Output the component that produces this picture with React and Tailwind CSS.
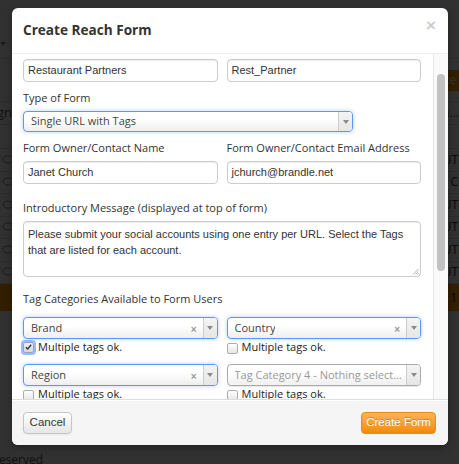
import React from 'react';

const sans = "font-['Open_Sans',sans-serif]";
const arial = "font-['Liberation_Sans',Arial,sans-serif]";

function Caret() {
  return (
    <svg width="6" height="4" viewBox="0 0 6 4" className="block">
      <path d="M0 0 L6 0 L3 4 Z" fill="#8a8a8a" />
    </svg>
  );
}

function TextInput({ value }) {
  return (
    <div
      className={`flex h-[23px] items-center rounded-[4px] border border-[#cccccc] bg-white pl-[4px] text-[11px] text-[#333] shadow-[inset_0_1px_1px_rgba(0,0,0,0.075)] ${arial}`}
    >
      {value}
    </div>
  );
}

function Chosen({ value, placeholder, clear, focused, height = 'h-[22px]' }) {
  return (
    <div
      className={`flex ${height} items-stretch overflow-hidden rounded-[4px] border bg-linear-to-b from-white from-40% to-[#eeeeee] ${
        focused
          ? 'border-[#5897fb] shadow-[0_0_4px_rgba(88,151,251,0.45)]'
          : 'border-[#aaaaaa] shadow-[0_0_3px_white_inset,0_1px_1px_rgba(0,0,0,0.1)]'
      }`}
    >
      <span
        className={`flex min-w-0 flex-1 items-center truncate pl-[7px] text-[11px] ${sans} ${
          placeholder ? 'text-[#999]' : 'text-[#444]'
        }`}
      >
        <span className="truncate">{value || placeholder}</span>
      </span>
      {clear && (
        <span className={`flex items-center pr-[6px] pt-[2px] text-[10px] font-bold text-[#999] ${arial}`}>
          ×
        </span>
      )}
      <span className="flex w-[14px] shrink-0 items-center justify-center border-l border-[#cccccc] bg-linear-to-b from-[#f4f4f4] to-[#e6e6e6]">
        <Caret />
      </span>
    </div>
  );
}

function Check({ checked, label }) {
  return (
    <div className="mt-[2px] flex h-[12px] items-center gap-[4px]">
      {checked ? (
        <span className="flex h-[11px] w-[11px] items-center justify-center rounded-[2px] border border-[#8aa4cf] bg-linear-to-b from-[#eeeeee] to-[#d8d8d8] shadow-[0_0_0_2px_rgba(100,150,240,0.65)]">
          <svg width="7" height="6" viewBox="0 0 7 6">
            <path d="M0.8 3.2 L2.7 5 L6.2 0.8" fill="none" stroke="#333" strokeWidth="1.4" />
          </svg>
        </span>
      ) : (
        <span className="mt-[3px] h-[11px] w-[11px] rounded-[2px] border border-[#adadad] bg-linear-to-b from-white to-[#e6e6e6]" />
      )}
      <span className={`text-[11px] leading-[12px] text-[#222] ${sans}`}>{label}</span>
    </div>
  );
}

function Label({ children, className = '' }) {
  return <div className={`text-[11px] leading-[15px] text-[#333] ${sans} ${className}`}>{children}</div>;
}

function BackgroundPage() {
  const rows = ['UT', 'C', 'UT', 'UT', 'UT', 'UT'];
  return (
    <div className={`h-full w-full bg-[#f2f2f2] text-[12px] text-[#555] ${sans}`}>
      <div className="flex h-[59px] items-end border-b border-[#dddddd] pb-[12px]">
        <Caret />
      </div>
      <div className="flex h-[42px] items-center justify-end">
        <div className="-mr-[4px] flex h-[21px] w-[20px] items-center overflow-hidden rounded-[3px] bg-[#f89406] pl-[2px] text-[12px] text-white">
          te
        </div>
      </div>
      <div className="flex h-[24px] items-center justify-between border-y border-[#dddddd]">
        <span className="text-[13px] -ml-[3px]">gns</span>
        <span className="text-[12px] text-[#777]">h...</span>
      </div>
      <div className="h-[24px] border-b border-[#dddddd]" />
      {rows.map((r, i) => (
        <div key={i} className="flex h-[22.5px] items-center justify-between border-b border-[#dddddd]">
          <svg width="12" height="10" viewBox="0 0 12 10" className="ml-[2px]">
            <ellipse cx="6" cy="4.5" rx="5" ry="3.6" fill="none" stroke="#888" strokeWidth="1" />
          </svg>
          <span className="pr-[1px] text-[12px] text-[#333]">{r}</span>
        </div>
      ))}
      <div className="flex h-[27px] items-center justify-end bg-[#f89406]">
        <span className="pr-[2px] text-[12px] text-[#222]">1</span>
      </div>
      <div className="mt-[140px] -ml-[6px] text-[12px] text-[#555]">reserved</div>
    </div>
  );
}

export default function App() {
  return (
    <div className="relative h-[464px] w-[459px] overflow-hidden">
      <BackgroundPage />
      <div className="absolute inset-0 bg-black/80" />

      <div className="absolute left-[12px] top-[8px] flex h-[437px] w-[436px] flex-col rounded-[6px] bg-white shadow-[0_3px_7px_rgba(0,0,0,0.3)]">
        <div className="flex h-[46px] shrink-0 items-center justify-between border-b border-[#eeeeee] pl-[11px] pr-[12px]">
          <h3 className={`text-[13.6px] font-bold text-[#333] ${sans}`}>Create Reach Form</h3>
          <span className={`-mt-[10px] text-[17px] font-bold leading-none text-[#cccccc] ${arial}`}>×</span>
        </div>

        <div className="flex h-[345px] shrink-0">
          <div className="h-full w-[421px] overflow-hidden pl-[11px] pr-[12px] pt-[5px]">
            <div className="grid grid-cols-2 gap-x-[9px]">
              <TextInput value="Restaurant Partners" />
              <TextInput value="Rest_Partner" />
            </div>

            <Label className="mt-[8px]">Type of Form</Label>
            <div className="mt-[6px] w-[330px]">
              <Chosen value="Single URL with Tags" focused height="h-[21px]" />
            </div>

            <div className="mt-[8px] grid grid-cols-2 gap-x-[9px]">
              <Label>Form Owner/Contact Name</Label>
              <Label>Form Owner/Contact Email Address</Label>
            </div>
            <div className="mt-[6px] grid grid-cols-2 gap-x-[9px]">
              <TextInput value="Janet Church" />
              <TextInput value="jchurch@brandle.net" />
            </div>

            <Label className="mt-[16px]">Introductory Message (displayed at top of form)</Label>
            <div
              className={`relative mt-[6px] h-[56px] rounded-[4px] border border-[#cccccc] bg-white px-[4px] pt-[4px] text-[11px] leading-[16px] text-[#333] shadow-[inset_0_1px_1px_rgba(0,0,0,0.075)] ${arial}`}
            >
              Please submit your social accounts using one entry per URL. Select the Tags that are listed for each account.
              <svg width="7" height="7" viewBox="0 0 7 7" className="absolute bottom-[1px] right-[1px]">
                <path d="M6.5 1 L1 6.5 M6.5 3.5 L3.5 6.5 M6.5 5.5 L5.5 6.5" stroke="#999" strokeWidth="0.8" />
              </svg>
            </div>

            <Label className="mt-[14px]">Tag Categories Available to Form Users</Label>

            <div className="mt-[11px] grid grid-cols-2 gap-x-[9px]">
              <div>
                <Chosen value="Brand" clear focused />
                <Check checked label="Multiple tags ok." />
              </div>
              <div>
                <Chosen value="Country" clear focused />
                <Check label="Multiple tags ok." />
              </div>
            </div>
            <div className="mt-[11px] grid grid-cols-2 gap-x-[9px]">
              <div>
                <Chosen value="Region" clear focused />
                <Check label="Multiple tags ok." />
              </div>
              <div>
                <Chosen placeholder="Tag Category 4 - Nothing selected" />
                <Check label="Multiple tags ok." />
              </div>
            </div>
          </div>

          <div className="h-full w-[15px] border-l border-[#e6e6e6] bg-[#fafafa] pl-[3px] pt-[20px]">
            <div className="h-[197px] w-[8px] rounded-full bg-[#c2c2c2]" />
          </div>
        </div>

        <div className="flex flex-1 items-center justify-between rounded-b-[6px] border-t border-[#dddddd] bg-[#f5f5f5] pl-[11px] pr-[12px] shadow-[inset_0_1px_0_white]">
          <button
            className={`h-[22px] w-[49px] rounded-[4px] border border-[#c5c5c5] bg-linear-to-b from-white to-[#e6e6e6] text-[11.5px] text-[#333] shadow-[inset_0_1px_0_rgba(255,255,255,0.2),0_1px_2px_rgba(0,0,0,0.05)] ${arial}`}
          >
            Cancel
          </button>
          <button
            className={`h-[22px] w-[75px] rounded-[4px] border border-[#e38d13] bg-linear-to-b from-[#fbb450] to-[#f48a00] text-[11.5px] text-white [text-shadow:0_-1px_0_rgba(0,0,0,0.25)] ${arial}`}
          >
            Create Form
          </button>
        </div>
      </div>
    </div>
  );
}
